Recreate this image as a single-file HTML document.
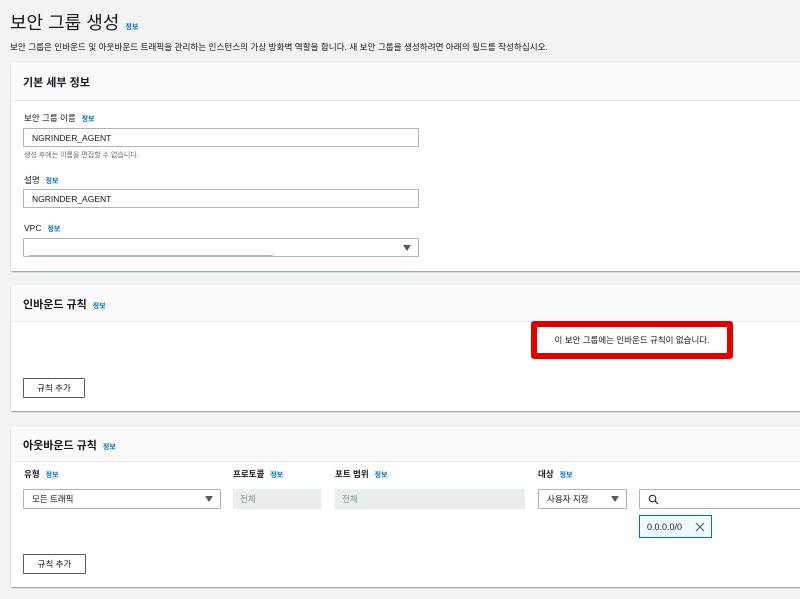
<!DOCTYPE html>
<html><head><meta charset="utf-8"><style>
*{margin:0;padding:0;box-sizing:border-box}
body{width:800px;height:599px;overflow:hidden;background:#f2f3f3;font-family:"Liberation Sans","Noto Sans CJK KR",sans-serif;color:#16191f;position:relative}
.a{position:absolute;white-space:nowrap}
.i{color:#0073bb;font-size:7px;font-weight:bold;margin-left:6px}
.panel{position:absolute;left:11px;width:800px;background:#fff;box-shadow:0 1px 1px rgba(0,28,36,.3),1px 1px 1px rgba(0,28,36,.15)}
.hd{position:absolute;left:0;top:0;width:100%;background:#fafafa;border-bottom:1px solid #eaeded}
.h2{font-size:11px;font-weight:bold}
.lbl{font-size:8.5px;font-weight:bold}
.inp{position:absolute;border:1px solid #aab7b8;background:#fff;font-size:8.5px;padding-left:8px;display:flex;align-items:center;border-radius:1px}
.dis{position:absolute;background:#eaeded;font-size:8.5px;color:#879596;padding-left:7px;display:flex;align-items:center}
.arr{position:absolute;right:7px;top:50%;margin-top:-3px;width:0;height:0;border-left:4px solid transparent;border-right:4px solid transparent;border-top:6px solid #545b64}
.btn{position:absolute;border:1px solid #545b64;background:#fff;font-size:8.5px;display:flex;align-items:center;justify-content:center;border-radius:1px}
</style></head><body>
<div class="a" style="left:10px;top:9px;font-size:18px">보안 그룹 생성<span class="i">정보</span></div>
<div class="a" style="left:10px;top:41px;font-size:8.6px;color:#16191f">보안 그룹은 인바운드 및 아웃바운드 트래픽을 관리하는 인스턴스의 가상 방화벽 역할을 합니다. 새 보안 그룹을 생성하려면 아래의 필드를 작성하십시오.</div>

<div class="panel" style="top:63px;height:208px">
 <div class="hd" style="height:38px"></div>
 <div class="a h2" style="left:12px;top:11px">기본 세부 정보</div>
 <div class="a lbl" style="left:13px;top:49px;font-weight:normal">보안 그룹 이름<span class="i">정보</span></div>
 <div class="inp" style="left:12px;top:65px;width:396px;height:19px">NGRINDER_AGENT</div>
 <div class="a" style="left:13px;top:87px;font-size:7px;color:#687078">생성 후에는 이름을 편집할 수 없습니다.</div>
 <div class="a lbl" style="left:13px;top:111px;font-weight:normal">설명<span class="i">정보</span></div>
 <div class="inp" style="left:12px;top:126px;width:396px;height:19px">NGRINDER_AGENT</div>
 <div class="a lbl" style="left:13px;top:160px;font-weight:normal">VPC<span class="i">정보</span></div>
 <div class="inp" style="left:12px;top:175px;width:396px;height:19px"><div style="position:absolute;left:4px;top:14px;width:246px;height:3px;border-bottom:1px solid #aab7b8;border-radius:0 0 3px 3px"></div><div class="arr"></div></div>
</div>

<div class="panel" style="top:285px;height:126px">
 <div class="hd" style="height:37px"></div>
 <div class="a h2" style="left:12px;top:11px">인바운드 규칙<span class="i">정보</span></div>
 <div class="a" style="left:520px;top:36px;width:202px;height:38px;border:6px solid #e00000;border-radius:3px;background:#fff;font-size:8.5px;display:flex;align-items:center;justify-content:center">이 보안 그룹에는 인바운드 규칙이 없습니다.</div>
 <div class="btn" style="left:12px;top:93px;width:62px;height:20px">규칙 추가</div>
</div>

<div class="panel" style="top:427px;height:160px">
 <div class="hd" style="height:35px"></div>
 <div class="a h2" style="left:12px;top:10px">아웃바운드 규칙<span class="i">정보</span></div>
 <div class="a lbl" style="left:13px;top:41px">유형<span class="i">정보</span></div>
 <div class="a lbl" style="left:222px;top:41px">프로토콜<span class="i">정보</span></div>
 <div class="a lbl" style="left:324px;top:41px">포트 범위<span class="i">정보</span></div>
 <div class="a lbl" style="left:527px;top:41px">대상<span class="i">정보</span></div>
 <div class="inp" style="left:12px;top:62px;width:198px;height:20px">모든 트래픽<div class="arr"></div></div>
 <div class="dis" style="left:222px;top:62px;width:88px;height:20px">전체</div>
 <div class="dis" style="left:324px;top:62px;width:190px;height:20px">전체</div>
 <div class="inp" style="left:527px;top:62px;width:89px;height:20px">사용자 지정<div class="arr"></div></div>
 <div class="inp" style="left:628px;top:62px;width:200px;height:20px"><svg width="11" height="11" viewBox="0 0 11 11"><circle cx="4.5" cy="4.5" r="3.3" fill="none" stroke="#16191f" stroke-width="1"/><path d="M7 7L10 10" stroke="#16191f" stroke-width="1.1"/></svg></div>
 <div class="a" style="left:628px;top:88px;width:73px;height:23px;border:1px solid #0073bb;background:#f1faff;font-size:9px;padding-left:7px;display:flex;align-items:center">0.0.0.0/0<svg style="position:absolute;right:6px;top:6px" width="10" height="10" viewBox="0 0 10 10"><path d="M1 1L9 9M9 1L1 9" stroke="#545b64" stroke-width="1.2"/></svg></div>
 <div class="btn" style="left:12px;top:127px;width:63px;height:20px">규칙 추가</div>
</div>
</body></html>
